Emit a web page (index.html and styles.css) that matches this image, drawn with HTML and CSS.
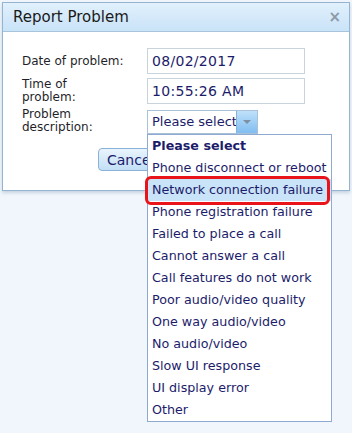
FILE: index.html
```html
<!DOCTYPE html>
<html>
<head>
<meta charset="utf-8">
<link rel="stylesheet" href="styles.css">
</head>
<body>
<div class="dialog">
  <div class="titlebar">
    <span class="title">Report Problem</span>
    <span class="close">&#215;</span>
  </div>
  <div class="content">
    <div class="form">
      <div class="label one">Date of problem:</div>
      <div class="field"><div class="input">08/02/2017</div></div>
      <div class="label">Time of<br>problem:</div>
      <div class="field"><div class="input">10:55:26 AM</div></div>
      <div class="label">Problem<br>description:</div>
      <div class="field sel-wrap">
        <div class="select"><span class="sel-text">Please select</span><span class="arrow"></span></div>
        <ul class="list">
          <li class="bold">Please select</li>
          <li>Phone disconnect or reboot</li>
          <li class="hl">Network connection failure</li>
          <li>Phone registration failure</li>
          <li>Failed to place a call</li>
          <li>Cannot answer a call</li>
          <li>Call features do not work</li>
          <li>Poor audio/video quality</li>
          <li>One way audio/video</li>
          <li>No audio/video</li>
          <li>Slow UI response</li>
          <li>UI display error</li>
          <li>Other</li>
        </ul>
      </div>
    </div>
    <div class="buttons">
      <button class="btn">Cancel</button>
    </div>
  </div>
</div>
</body>
</html>
```
FILE: styles.css
```css
html, body {
  margin: 0;
  padding: 0;
}
body {
  background: #f0f6fb;
  font-family: "DejaVu Sans", Verdana, sans-serif;
  width: 352px;
  height: 433px;
  overflow: hidden;
}
.dialog {
  margin: 2px 0 0 2px;
  width: 346px;
  border: 1px solid #94b4d0;
  background: #fff;
  box-shadow: 0 2px 3px rgba(120, 150, 180, 0.35);
}
.titlebar {
  height: 28px;
  background: linear-gradient(#e1f0fc, #c9e3f8);
  border-bottom: 1px solid #a7c4dc;
  display: flex;
  align-items: center;
  justify-content: space-between;
  padding: 0 8px 0 10px;
}
.title {
  font-size: 15px;
  color: #1a1a1a;
}
.close {
  font-size: 15px;
  color: #8a9aa8;
  font-weight: bold;
}
.content {
  height: 158px;
}
.form {
  display: grid;
  grid-template-columns: 126px 158px;
  row-gap: 4px;
  padding: 16px 0 0 18px;
}
.label {
  font-size: 12px;
  color: #1f1f2a;
  line-height: 13px;
  display: flex;
  align-items: center;
  padding-left: 1px;
}
.input {
  height: 24px;
  border: 1px solid #c9d3dc;
  font-size: 14px;
  color: #1c1c6a;
  line-height: 24px;
  padding-left: 4px;
  letter-spacing: 0.3px;
}
.sel-wrap {
  position: relative;
  padding-top: 2px;
}
.select {
  width: 109px;
  height: 22px;
  border: 1px solid #a9c2d8;
  display: flex;
}
.sel-text {
  flex: 1;
  font-size: 13px;
  color: #1c1c6a;
  line-height: 22px;
  padding-left: 4px;
  white-space: nowrap;
  overflow: hidden;
}
.arrow {
  width: 20px;
  flex: none;
  background: linear-gradient(#bfe1fa, #80bdf0);
  border-left: 1px solid #86b3da;
  position: relative;
}
.arrow::after {
  content: "";
  position: absolute;
  left: 6px;
  top: 9px;
  border-left: 4px solid transparent;
  border-right: 4px solid transparent;
  border-top: 4px solid #7d8fa3;
}
.list {
  position: absolute;
  left: 0;
  top: 26px;
  width: 183px;
  margin: 0;
  padding: 0;
  list-style: none;
  background: #fff;
  border: 1px solid #8eaad0;
  z-index: 2;
}
.list li {
  height: 22px;
  line-height: 22px;
  font-size: 12.7px;
  color: #1c1c6a;
  padding-left: 4px;
  white-space: nowrap;
  position: relative;
}
.list li.bold {
  font-weight: bold;
}
.list li.hl {
  background: #c9e3f8;
}
.list li.hl::after {
  content: "";
  position: absolute;
  left: -3px;
  right: 1px;
  top: -3px;
  bottom: -4px;
  border: 3px solid #e8141a;
  border-radius: 6px;
}
.buttons {
  padding: 14px 0 0 95px;
}
.btn {
  font-family: "DejaVu Sans", Verdana, sans-serif;
  font-size: 14px;
  color: #1c1c6a;
  height: 23px;
  padding: 0 8px;
  border: 1px solid #8ab1d6;
  border-radius: 4px;
  background: linear-gradient(#e9f4fd, #c2dff6);
}
```
